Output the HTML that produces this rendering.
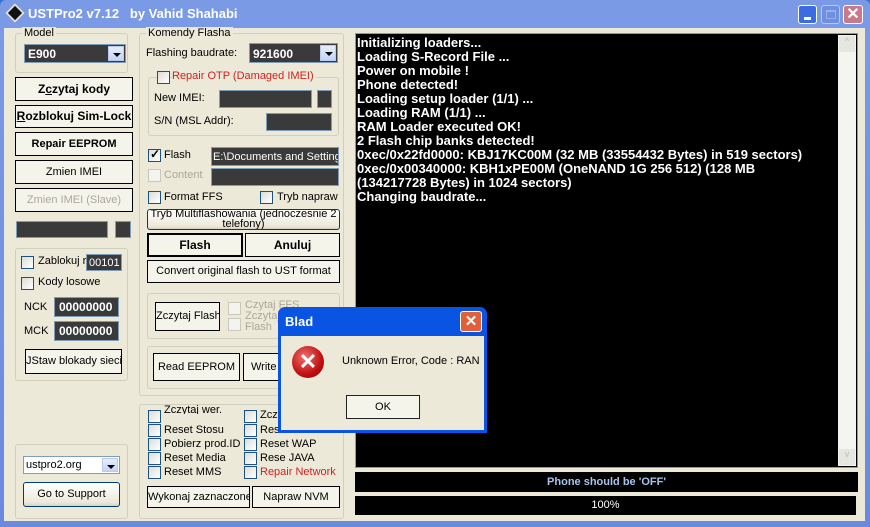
<!DOCTYPE html><html><head><style>
*{margin:0;padding:0;box-sizing:border-box}
body{width:870px;height:527px;overflow:hidden;background:#3d6fd8;font-family:"Liberation Sans",sans-serif;font-size:11px;color:#000;position:relative}
div,span{position:absolute}
.win{left:0;top:0;width:870px;height:527px;background:linear-gradient(#7b9ae6,#6a8ae0);border-radius:6px 6px 0 0}
.body{left:4px;top:28px;width:861px;height:493px;background:#ece9d8}
.t{white-space:nowrap}
.grp{border:1px solid #d0d0bf;border-radius:3px}
.lg{background:#ece9d8;padding:0 2px;top:-7px;left:6px;white-space:nowrap}
.btn{border:1px solid #003c74;background:linear-gradient(#fff,#ece9d8 85%,#d6d0c5);border-radius:3px;text-align:center;white-space:nowrap;overflow:hidden}
.btn2{border:1px solid #000;background:#f5f4ea;text-align:center;white-space:nowrap;overflow:hidden}
.dk{background:#3a3a3a;border:1px solid #7f9db9}
.cb{width:13px;height:13px;border:1px solid #1c5180;background:linear-gradient(135deg,#dcdcd7,#fff)}
.cbd{border-color:#cac8bb;background:#f4f3ee}
.dd{width:16px;background:linear-gradient(#e6eefc,#c4d4f4);border:1px solid #b9c9ef;top:1px;bottom:1px;right:1px}
.dd:after{content:"";position:absolute;left:4px;top:6px;border:4px solid transparent;border-top:4px solid #000;border-bottom:0}
.con{color:#fff;font-weight:bold;font-size:13px;line-height:14px}
</style></head><body>
<div class="win"></div>
<div class="t" style="left:8px;top:6px;width:14px;height:14px;background:#111;transform:rotate(45deg);border:2px solid #ddd"></div>
<div class="t" style="left:28px;top:6px;color:#fff;font-weight:bold;font-size:13px">USTPro2 v7.12 &nbsp;&nbsp;by Vahid Shahabi</div>
<div style="left:798px;top:5px;width:19px;height:19px;background:#3c6ce0;border:1px solid #fff;border-radius:3px"><span style="left:5px;top:11px;width:7px;height:3px;background:#fff"></span></div>
<div style="left:821px;top:5px;width:19px;height:19px;background:#6f8fe0;border:1px solid #b8c8f0;border-radius:3px"><span style="left:4px;top:4px;width:10px;height:9px;border:1px solid #9ab0ea;border-top-width:2px"></span></div>
<div style="left:843px;top:5px;width:20px;height:19px;background:#c87a8a;border:1px solid #fff;border-radius:3px;color:#fff;font-size:16px;line-height:17px;text-align:center;font-weight:bold">✕</div>
<div class="body"></div>

<div class="grp" style="left:15px;top:33px;width:113px;height:40px"><span class="lg">Model</span></div>
<div class="dk" style="left:24px;top:44px;width:102px;height:19px"><span class="t" style="left:3px;top:2px;color:#fff;font-weight:bold;font-size:12px">E900</span><span class="dd"></span></div>
<div class="btn2" style="left:15px;top:77px;width:118px;height:24px;font-weight:bold;font-size:12px;line-height:22px">Z<u>c</u>zytaj kody</div>
<div class="btn2" style="left:15px;top:105px;width:118px;height:23px;font-weight:bold;font-size:12px;line-height:21px"><u>R</u>ozblokuj Sim-Lock</div>
<div class="btn2" style="left:15px;top:132px;width:118px;height:24px;font-weight:bold;line-height:22px">Repair EEPROM</div>
<div class="btn2" style="left:15px;top:160px;width:118px;height:24px;line-height:22px">Zmien IMEI</div>
<div class="btn2" style="left:15px;top:188px;width:118px;height:24px;line-height:22px;color:#aca899">Zmien IMEI (Slave)</div>
<div class="dk" style="left:16px;top:221px;width:92px;height:17px"></div>
<div class="dk" style="left:115px;top:221px;width:16px;height:17px"></div>
<div class="grp" style="left:15px;top:248px;width:113px;height:133px"></div>
<div class="cb" style="left:21px;top:256px"></div><div class="t" style="left:38px;top:255px">Zablokuj r</div>
<div class="dk" style="left:86px;top:254px;width:36px;height:17px"><span class="t" style="left:2px;top:2px;color:#fff">00101</span></div>
<div class="cb" style="left:21px;top:277px"></div><div class="t" style="left:38px;top:276px">Kody losowe</div>
<div class="t" style="left:24px;top:301px">NCK</div>
<div class="dk" style="left:54px;top:297px;width:65px;height:20px"><span class="t" style="left:4px;top:2px;color:#fff;font-weight:bold;font-size:12px">00000000</span></div>
<div class="t" style="left:24px;top:325px">MCK</div>
<div class="dk" style="left:54px;top:321px;width:65px;height:20px"><span class="t" style="left:4px;top:2px;color:#fff;font-weight:bold;font-size:12px">00000000</span></div>
<div class="btn2" style="left:25px;top:349px;width:97px;height:25px;line-height:23px;text-align:left">JStaw blokady sieci</div>
<div class="grp" style="left:15px;top:444px;width:113px;height:75px"></div>
<div style="left:23px;top:456px;width:97px;height:18px;background:#fff;border:1px solid #7f9db9"><span class="t" style="left:2px;top:2px">ustpro2.org</span><span class="dd"></span></div>
<div class="btn" style="left:23px;top:482px;width:97px;height:25px;line-height:23px">Go to Support</div>

<div class="grp" style="left:139px;top:33px;width:205px;height:363px"><span class="lg">Komendy Flasha</span></div>
<div class="t" style="left:146px;top:47px">Flashing baudrate:</div>
<div class="dk" style="left:249px;top:43px;width:89px;height:20px"><span class="t" style="left:3px;top:3px;color:#fff;font-weight:bold;font-size:12px">921600</span><span class="dd"></span></div>
<div class="grp" style="left:148px;top:77px;width:191px;height:59px"></div>
<div class="cb" style="left:157px;top:71px"></div><div class="t" style="left:172px;top:70px;color:#d42020;background:#ece9d8;padding-right:2px">Repair OTP (Damaged IMEI)</div>
<div class="t" style="left:154px;top:92px">New IMEI:</div>
<div class="dk" style="left:219px;top:90px;width:93px;height:18px"></div>
<div class="dk" style="left:317px;top:90px;width:15px;height:18px"></div>
<div class="t" style="left:154px;top:115px">S/N (MSL Addr):</div>
<div class="dk" style="left:266px;top:113px;width:66px;height:18px"></div>
<div class="cb" style="left:148px;top:149px"><span style="left:1px;top:-3px;font-size:12px;font-weight:bold">✓</span></div><div class="t" style="left:164px;top:149px">Flash</div>
<div class="dk" style="left:211px;top:147px;width:128px;height:19px;overflow:hidden"><span class="t" style="left:1px;top:3px;color:#fff">E:\Documents and Settings</span></div>
<div class="cb cbd" style="left:148px;top:169px"></div><div class="t" style="left:164px;top:169px;color:#aca899">Content</div>
<div class="dk" style="left:211px;top:168px;width:128px;height:18px"></div>
<div class="cb" style="left:148px;top:191px"></div><div class="t" style="left:164px;top:191px">Format FFS</div>
<div class="cb" style="left:260px;top:191px"></div><div class="t" style="left:277px;top:191px">Tryb napraw</div>
<div class="btn" style="left:147px;top:209px;width:193px;height:21px;line-height:10px;padding-top:0;white-space:normal"><span style="left:0;right:0;top:-1px">Tryb Multiflashowania (jednoczesnie 2 telefony)</span></div>
<div class="btn2" style="left:147px;top:233px;width:96px;height:24px;font-weight:bold;font-size:12px;line-height:20px;border-width:2px">Flash</div>
<div class="btn2" style="left:245px;top:233px;width:95px;height:24px;font-weight:bold;font-size:12px;line-height:22px">Anuluj</div>
<div class="btn2" style="left:147px;top:260px;width:193px;height:23px;line-height:21px">Convert original flash to UST format</div>
<div class="grp" style="left:147px;top:293px;width:193px;height:46px"></div>
<div class="btn2" style="left:155px;top:302px;width:65px;height:29px;line-height:27px">Zczytaj Flash</div>
<div class="cb cbd" style="left:228px;top:302px"></div><div class="t" style="left:245px;top:300px;color:#aca899;line-height:11px">Czytaj FFS<br>Zczytaj<br>Flash</div>
<div class="cb cbd" style="left:228px;top:318px"></div>
<div class="grp" style="left:147px;top:346px;width:193px;height:43px"></div>
<div class="btn2" style="left:153px;top:353px;width:87px;height:28px;line-height:26px">Read EEPROM</div>
<div class="btn2" style="left:243px;top:353px;width:60px;height:28px;line-height:26px;text-align:left;padding-left:7px">Write</div>
<div class="grp" style="left:139px;top:404px;width:205px;height:115px"></div>
<div style="left:140px;top:405px;width:203px;height:9px;overflow:hidden"><span class="t" style="left:24px;top:1px;line-height:9px">Zczytaj wer.</span></div>
<div class="cb" style="left:148px;top:410px"></div><div class="cb" style="left:244px;top:410px"></div>
<div class="t" style="left:260px;top:409px">Zczy</div>
<div class="cb" style="left:148px;top:424px"></div><div class="t" style="left:164px;top:424px">Reset Stosu</div>
<div class="cb" style="left:244px;top:424px"></div><div class="t" style="left:260px;top:424px">Reset NVM</div>
<div class="cb" style="left:148px;top:438px"></div><div class="t" style="left:164px;top:438px">Pobierz prod.ID</div>
<div class="cb" style="left:244px;top:438px"></div><div class="t" style="left:260px;top:438px">Reset WAP</div>
<div class="cb" style="left:148px;top:452px"></div><div class="t" style="left:164px;top:452px">Reset Media</div>
<div class="cb" style="left:244px;top:452px"></div><div class="t" style="left:260px;top:452px">Rese JAVA</div>
<div class="cb" style="left:148px;top:466px"></div><div class="t" style="left:164px;top:466px">Reset MMS</div>
<div class="cb" style="left:244px;top:466px"></div><div class="t" style="left:260px;top:466px;color:#d42020">Repair Network</div>
<div class="btn2" style="left:147px;top:486px;width:103px;height:22px;line-height:20px;text-align:right;padding-right:1px">Wykonaj zaznaczone zad.</div>
<div class="btn2" style="left:252px;top:486px;width:88px;height:22px;line-height:20px">Napraw NVM</div>

<div style="left:355px;top:33px;width:503px;height:435px;background:#000;border:1px solid #7f9db9"></div>
<div style="left:838px;top:35px;width:18px;height:431px;background:#f4f4f0"><span style="left:1px;top:1px;width:16px;height:16px;background:#e6e6e0;color:#bbb;font-size:9px;text-align:center">^</span><span style="left:1px;bottom:1px;width:16px;height:16px;background:#e6e6e0;color:#bbb;font-size:9px;text-align:center">v</span></div>
<div class="con t" style="left:357px;top:36px">Initializing loaders...<br>Loading S-Record File ...<br>Power on mobile !<br>Phone detected!<br>Loading setup loader (1/1) ...<br>Loading RAM (1/1) ...<br>RAM Loader executed OK!<br>2 Flash chip banks detected!<br>0xec/0x22fd0000: KBJ17KC00M (32 MB (33554432 Bytes) in 519 sectors)<br>0xec/0x00340000: KBH1xPE00M (OneNAND 1G 256 512) (128 MB<br>(134217728 Bytes) in 1024 sectors)<br>Changing baudrate...</div>
<div style="left:355px;top:472px;width:503px;height:20px;background:#000;color:#a6c4ec;font-weight:bold;text-align:center;line-height:20px">Phone should be 'OFF'</div>
<div style="left:355px;top:496px;width:501px;height:19px;background:#000;color:#fff;text-align:center;line-height:19px">100%</div>

<div style="left:278px;top:307px;width:209px;height:126px;background:#0a54e4;border-radius:7px 7px 0 0"></div>
<div class="t" style="left:285px;top:314px;color:#fff;font-weight:bold;font-size:13px">Blad</div>
<div style="left:460px;top:311px;width:22px;height:21px;background:#e0603a;border:1px solid #fff;border-radius:3px;color:#fff;font-size:15px;text-align:center;line-height:19px;font-weight:bold">✕</div>
<div style="left:281px;top:336px;width:203px;height:94px;background:#ece9d8"></div>
<div style="left:292px;top:346px;width:32px;height:32px;border-radius:50%;background:radial-gradient(circle at 40% 35%,#f07070,#c01010 60%,#8a0000);color:#fff;font-size:22px;font-weight:bold;text-align:center;line-height:32px">✕</div>
<div class="t" style="left:342px;top:355px">Unknown Error, Code : RAN</div>
<div class="btn2" style="left:346px;top:395px;width:74px;height:24px;line-height:22px;border-color:#222">OK</div>
</body></html>
